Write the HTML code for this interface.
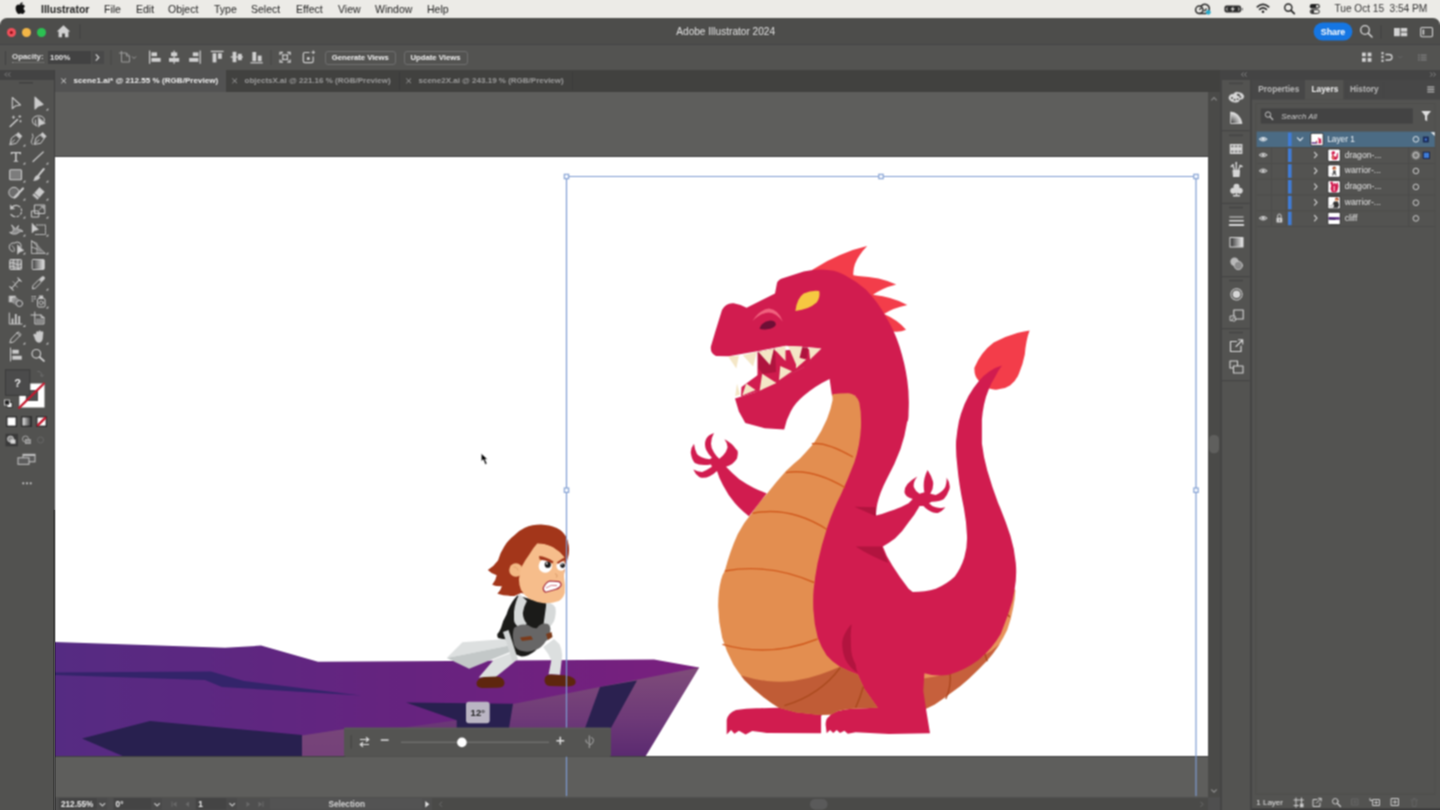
<!DOCTYPE html>
<html>
<head>
<meta charset="utf-8">
<title>Adobe Illustrator 2024</title>
<style>
html,body{margin:0;padding:0;}
body{width:1440px;height:810px;overflow:hidden;position:relative;background:#4d4d4d;font-family:"Liberation Sans",sans-serif;font-size:9px;color:#e6e6e6;-webkit-font-smoothing:antialiased;}
.abs{position:absolute;}
#soft{position:absolute;left:0;top:0;width:1440px;height:810px;filter:url(#sb);}
/* mac menu bar */
#menubar{left:0;top:0;width:1440px;height:28px;background:#ecebe7;color:#1d1d1d;font-size:10.5px;}
#menubar span{position:absolute;top:3px;white-space:nowrap;}
/* title bar */
#titlebar{left:0;top:18px;width:1440px;height:26px;background:#4d4d4b;border-radius:7px 7px 0 0;}
#ctrlbar{left:0;top:44px;width:1440px;height:26px;background:#535351;border-top:1px solid #454545;box-sizing:border-box;}
#tabbar{left:0;top:70px;width:1440px;height:22px;background:#41413f;}
.tl{position:absolute;top:28px;width:9px;height:9px;border-radius:50%;}
/* toolbar */
#toolbar{left:0;top:70px;width:54px;height:740px;background:#525250;}
#canvas{left:55px;top:92px;width:1153px;height:706px;background:#5e5e5c;overflow:hidden;}
#artboard{left:0;top:64px;width:1153px;height:599px;background:#fff;border-top:1px solid #404040;border-bottom:1.500px solid #404040;box-sizing:content-box;}
#vscroll{left:1208px;top:92px;width:12px;height:704px;background:#4a4a48;}
#status{left:55px;top:796px;width:1165px;height:14px;background:#4c4c4c;}
#dockgap{left:1220px;top:70px;width:220px;height:740px;background:#444444;}
#dock{left:1222px;top:80px;width:27.500px;height:730px;background:#535351;}
#panel{left:1251.700px;top:80px;width:188.300px;height:730px;background:#535351;}
.ptab{position:absolute;top:0;height:20px;line-height:18px;font-size:8.5px;font-weight:bold;color:#bdbdbd;}
.row{position:absolute;left:4px;width:180px;height:15px;}
.lname{position:absolute;font-size:8.5px;color:#e0e0e0;top:3px;}
.lay{font-size:8.600px;color:#e2e2e2;line-height:11px;white-space:nowrap;}
.st{font-size:8.200px;line-height:11px;white-space:nowrap;}
.btn{position:absolute;border:1px solid #6f6f6f;border-radius:3px;color:#f0f0f0;font-size:7.700px;font-weight:bold;text-align:center;box-sizing:border-box;}
</style>
</head>
<body>
<svg width="0" height="0" style="position:absolute"><defs><filter id="sb" x="0" y="0" width="100%" height="100%" color-interpolation-filters="sRGB"><feConvolveMatrix order="3" kernelMatrix="1 2 1 2 4 2 1 2 1" divisor="16" edgeMode="duplicate" preserveAlpha="true"/></filter></defs></svg>
<div id="soft">

<!-- MENUBAR -->
<div id="menubar" class="abs">
  <svg class="abs" style="left:15px;top:2px" width="11" height="13" viewBox="0 0 11 13"><path d="M7.6 0.2c0.1 0.8-0.3 1.6-0.8 2.1-0.5 0.5-1.200 0.900-1.900 0.800-0.100-0.800 0.300-1.500 0.800-2 0.500-0.500 1.300-0.900 1.900-0.900zM9.900 4.400c-0.100 0.100-1.300 0.800-1.300 2.200 0 1.700 1.500 2.300 1.600 2.300-0 0.100-0.300 0.900-0.800 1.700-0.500 0.700-1 1.400-1.800 1.400-0.800 0-1-0.500-1.900-0.500-0.900 0-1.200 0.500-1.900 0.500-0.800 0-1.300-0.700-1.900-1.500C1.200 9.400 0.600 7.700 0.600 6.100c0-2.300 1.500-3.500 2.900-3.500 0.800 0 1.400 0.500 1.900 0.500 0.500 0 1.200-0.500 2.100-0.500 0.300 0 1.600 0 2.400 1.800z" fill="#111"/></svg>
  <span style="left:41px;font-weight:bold">Illustrator</span>
  <span style="left:104px">File</span>
  <span style="left:136px">Edit</span>
  <span style="left:168px">Object</span>
  <span style="left:214px">Type</span>
  <span style="left:251px">Select</span>
  <span style="left:296px">Effect</span>
  <span style="left:338px">View</span>
  <span style="left:375px">Window</span>
  <span style="left:427px">Help</span>
  <span style="left:1334.500px;font-size:10.200px;color:#333;letter-spacing:-0.050px">Tue Oct 15&nbsp; 3:54 PM</span>
</div>

<!-- TITLE BAR -->
<div id="titlebar" class="abs"></div>
<div class="tl" style="left:7px;background:#f0505a"></div>
<div class="tl" style="left:22px;background:#f3b647"></div>
<div class="tl" style="left:37px;background:#2cc152"></div>
<div class="abs" id="ttl" style="left:676.3px;top:25.8px;font-size:10.1px;color:#e2e2e2;white-space:nowrap">Adobe Illustrator 2024</div>

<!-- CONTROL BAR -->
<div id="ctrlbar" class="abs"></div>

<!-- TAB BAR -->
<div id="tabbar" class="abs"></div>

<!-- menubar status icons -->
<svg class="abs" style="left:1190px;top:0" width="140" height="18" viewBox="1190 0 140 18">
  <!-- creative cloud -->
  <g fill="none" stroke="#2c2c2c" stroke-width="1.500">
    <circle cx="1199.300" cy="9.800" r="3.700"/>
    <path d="M1201 6.200 Q1203 3.800 1206 4.500 Q1209.500 5.600 1209.300 9.200 Q1209 12.500 1206 13.400 L1199.300 13.500"/>
    <path d="M1199.500 10 Q1200 7.800 1202 7.800 M1204 10.800 Q1206.300 10.300 1206.200 8.300" stroke-width="1.200"/>
  </g>
  <circle cx="1208.300" cy="12.300" r="2.400" fill="#29a9c9"/>
  <!-- battery -->
  <rect x="1224.500" y="5.600" width="16.500" height="7" rx="2" fill="#2a2a2a"/>
  <rect x="1241.600" y="7.800" width="1.300" height="2.800" rx="0.600" fill="#6a6a6a"/>
  <path d="M1233.600 6.300 L1230.500 9.600 L1232.600 9.600 L1231.800 12 L1235 8.600 L1232.900 8.600 Z" fill="#ecebe7"/>
  <path d="M1227.200 7.400 Q1226 9 1227.200 10.800 M1238.600 7.400 Q1239.800 9 1238.600 10.800" stroke="#ecebe7" stroke-width="0.900" fill="none"/>
  <!-- wifi -->
  <g fill="none" stroke="#222" stroke-width="1.700" stroke-linecap="round">
    <path d="M1257.300 6.800 Q1263 2 1268.700 6.800"/>
    <path d="M1259.600 9.300 Q1263 6.300 1266.400 9.300"/>
  </g>
  <circle cx="1263" cy="11.800" r="1.300" fill="#222"/>
  <!-- search -->
  <circle cx="1288.300" cy="7.600" r="3.600" fill="none" stroke="#222" stroke-width="1.400"/>
  <path d="M1291 10.300 L1294.300 13.600" stroke="#222" stroke-width="1.700" stroke-linecap="round"/>
  <!-- control centre -->
  <rect x="1309.800" y="4" width="10" height="4.400" rx="2.200" fill="#222"/>
  <circle cx="1317.300" cy="6.200" r="1.300" fill="#ecebe7"/>
  <rect x="1310.300" y="9.700" width="9" height="3.800" rx="1.900" fill="none" stroke="#222" stroke-width="1"/>
  <circle cx="1312.600" cy="11.600" r="1.500" fill="#222"/>
</svg>

<!-- title bar content -->
<svg class="abs" style="left:0;top:18px" width="1440" height="26" viewBox="0 18 1440 26">
  <circle cx="11.300" cy="32.500" r="1.500" fill="#8c1018"/>
  <!-- home -->
  <path d="M63.500 25.200 L56.800 31.400 L58.600 31.400 L58.600 37.300 L62 37.300 L62 33.600 L65 33.600 L65 37.300 L68.400 37.300 L68.400 31.400 L70.200 31.400 Z" fill="#d2d2d2"/>
  <rect x="79.500" y="24" width="1" height="15" fill="#434343"/>
  <!-- share -->
  <rect x="1313.600" y="22.600" width="38.800" height="18" rx="9" fill="#1576e3"/>
  <text x="1333" y="35" font-family="Liberation Sans, sans-serif" font-size="8.800" font-weight="bold" fill="#fff" text-anchor="middle">Share</text>
  <!-- search -->
  <circle cx="1365" cy="30" r="4.300" fill="none" stroke="#d6d6d6" stroke-width="1.300"/>
  <path d="M1368.200 33.200 L1372 37" stroke="#d6d6d6" stroke-width="1.500" stroke-linecap="round"/>
  <rect x="1380.500" y="25" width="1" height="14" fill="#434343"/>
  <!-- layout 1 -->
  <rect x="1394" y="28" width="5.800" height="8.200" fill="#d2d2d2"/>
  <rect x="1400.800" y="28" width="6.400" height="3.600" fill="#d2d2d2"/>
  <rect x="1400.800" y="32.600" width="6.400" height="3.600" fill="#d2d2d2"/>
  <!-- layout 2 -->
  <rect x="1420.700" y="27.500" width="11.800" height="9.200" rx="1.200" fill="none" stroke="#d2d2d2" stroke-width="1.100"/>
  <rect x="1422.600" y="29.500" width="1.600" height="5.200" fill="#d2d2d2"/>
</svg>

<!-- control bar content -->
<div class="abs" style="left:4.500px;top:50.500px;width:1.200px;height:14px;background:#414141"></div>
<div class="abs" style="left:12px;top:51.500px;font-size:7.900px;font-weight:bold;color:#e0e0e0;border-bottom:1px dotted #8a8a8a;line-height:10px;white-space:nowrap">Opacity:</div>
<div class="abs" style="left:47.500px;top:51px;width:43.500px;height:13px;background:#424242"></div>
<div class="abs" style="left:50px;top:52px;font-size:7.900px;font-weight:bold;color:#e6e6e6;line-height:11px">100%</div>
<div class="abs" style="left:92px;top:51px;width:11.500px;height:13px;background:#494949"></div>
<svg class="abs" style="left:0;top:44px" width="1440" height="26" viewBox="0 44 1440 26">
  <path d="M95.800 54.300 L98.800 57.500 L95.800 60.700" stroke="#d8d8d8" stroke-width="1.200" fill="none"/>
  <rect x="110.500" y="50" width="1" height="15" fill="#474747"/>
  <!-- doc setup icon -->
  <g stroke="#9b9b9b" stroke-width="1" fill="none">
    <path d="M121.500 51 L121.500 62 L129.500 62 L129.500 56 L126.500 53 L119 53 M126.500 53 L126.500 56 L129.500 56"/>
    <path d="M132 56.500 L134 58.500 L136 56.500"/>
  </g>
  <!-- align icons -->
  <g fill="#d0d0d0">
    <rect x="149" y="50.600" width="1.200" height="13.200"/><rect x="151.400" y="52.400" width="5.600" height="3.800"/><rect x="151.400" y="58" width="9.200" height="3.800"/>
    <rect x="173.500" y="50.600" width="1.200" height="13.200"/><rect x="171" y="52.400" width="6.200" height="3.800"/><rect x="169" y="58" width="10.200" height="3.800"/>
    <rect x="199.600" y="50.600" width="1.200" height="13.200"/><rect x="192.800" y="52.400" width="5.600" height="3.800"/><rect x="189.200" y="58" width="9.200" height="3.800"/>
    <rect x="210.800" y="50.800" width="12.800" height="1.200"/><rect x="212.600" y="53.200" width="3.800" height="9.200"/><rect x="218" y="53.200" width="3.800" height="5.600"/>
    <rect x="230.600" y="56.400" width="12.400" height="1.200"/><rect x="232.600" y="51.800" width="3.800" height="10.400"/><rect x="238" y="53.800" width="3.800" height="6.400"/>
    <rect x="250.400" y="62.200" width="12.400" height="1.200"/><rect x="252.400" y="52" width="3.800" height="9.200"/><rect x="257.800" y="55.600" width="3.800" height="5.600"/>
  </g>
  <rect x="270.500" y="50" width="1" height="15" fill="#474747"/>
  <!-- focus icon -->
  <g stroke="#cfcfcf" stroke-width="1.200" fill="none">
    <path d="M280 55 L280 52.300 L283 52.300 M287.200 52.300 L290.200 52.300 L290.200 55 M290.200 59.400 L290.200 62.200 L287.200 62.200 M283 62.200 L280 62.200 L280 59.400"/>
    <rect x="282.800" y="55" width="4.600" height="4.500"/>
    <path d="M280.500 52.800 L282.800 55 M289.700 52.800 L287.400 55 M289.700 61.700 L287.400 59.500 M280.500 61.700 L282.800 59.500" stroke-width="0.800"/>
  </g>
  <!-- generate icon -->
  <g stroke="#cfcfcf" stroke-width="1.200" fill="none">
    <path d="M309.500 52.500 L305 52.500 Q303.300 52.500 303.300 54.200 L303.300 61 Q303.300 62.700 305 62.700 L311.500 62.700 Q313.200 62.700 313.200 61 L313.200 56.500"/>
    <circle cx="308.300" cy="58.400" r="0.900" fill="#cfcfcf"/>
    <path d="M313.300 50.500 L313.300 54.100 M311.500 52.300 L315.100 52.300" stroke-width="1"/>
  </g>
</svg>
<div class="btn" style="left:325px;top:50.500px;width:70.500px;height:14px;line-height:12px">Generate Views</div>
<div class="btn" style="left:403.500px;top:50.500px;width:64px;height:14px;line-height:12px">Update Views</div>
<svg class="abs" style="left:1350px;top:44px" width="90" height="26" viewBox="1350 44 90 26">
  <g fill="#d2d2d2">
    <rect x="1362" y="52.600" width="3.800" height="3.800"/><rect x="1367.600" y="52.600" width="3.800" height="3.800"/><rect x="1362" y="58" width="3.800" height="3.800"/><rect x="1367.600" y="58" width="3.800" height="3.800"/>
    <rect x="1381.500" y="52" width="2" height="2.400"/><rect x="1381.500" y="55.800" width="2" height="2.400"/><rect x="1381.500" y="59.600" width="2" height="2.400"/>
  </g>
  <path d="M1385.500 54.500 L1389 54.500 Q1392 54.500 1392 57.200 Q1392 60 1389 60 L1385.500 60" stroke="#d2d2d2" stroke-width="1.300" fill="none"/>
  <path d="M1398.300 56 L1400.300 58 L1402.300 56" stroke="#666" stroke-width="1" fill="none"/>
  <g fill="#777">
    <rect x="1418" y="54.400" width="1.600" height="1.500"/><rect x="1420.600" y="54.400" width="6" height="1.500"/>
    <rect x="1418" y="56.800" width="1.600" height="1.500"/><rect x="1420.600" y="56.800" width="6" height="1.500"/>
    <rect x="1418" y="59.200" width="1.600" height="1.500"/><rect x="1420.600" y="59.200" width="6" height="1.500"/>
  </g>
</svg>

<!-- tabs -->
<div class="abs" style="left:54px;top:70px;width:171.500px;height:22px;background:#525252"></div>
<div class="abs" style="left:399px;top:72px;width:1px;height:18px;background:#393939"></div>
<div class="abs" style="left:572px;top:72px;width:1px;height:18px;background:#3b3b3a"></div>
<svg class="abs" style="left:60px;top:77px" width="8" height="8"><path d="M1.300 1.500 L6 6.200 M6 1.500 L1.300 6.200" stroke="#d6d6d6" stroke-width="1" fill="none"/></svg>
<div class="abs" id="t1" style="left:73.500px;top:74.800px;font-size:8px;font-weight:bold;color:#f2f2f2;line-height:11px;white-space:nowrap;letter-spacing:0.050px">scene1.ai* @ 212.55 % (RGB/Preview)</div>
<svg class="abs" style="left:231px;top:77px" width="8" height="8"><path d="M1.300 1.500 L6 6.200 M6 1.500 L1.300 6.200" stroke="#9a9a9a" stroke-width="1" fill="none"/></svg>
<div class="abs" id="t2" style="left:244.500px;top:74.800px;font-size:8px;font-weight:bold;color:#9d9d9d;line-height:11px;white-space:nowrap">objectsX.ai @ 221.16 % (RGB/Preview)</div>
<svg class="abs" style="left:404.700px;top:77px" width="8" height="8"><path d="M1.300 1.500 L6 6.200 M6 1.500 L1.300 6.200" stroke="#9a9a9a" stroke-width="1" fill="none"/></svg>
<div class="abs" id="t3" style="left:418.500px;top:74.800px;font-size:8px;font-weight:bold;color:#9d9d9d;line-height:11px;white-space:nowrap">scene2X.ai @ 243.19 % (RGB/Preview)</div>

<!-- TOOLBAR -->
<div id="toolbar" class="abs"></div>
<div class="abs" style="left:0;top:70px;width:54px;height:9.500px;background:#434343"></div>
<svg class="abs" style="left:0;top:70px" width="55" height="440" viewBox="0 70 55 440">
  <rect x="54" y="70" width="1" height="440" fill="#3e3e3e"/>
  <path d="M7 72.500 L5 74.500 L7 76.500 M10.200 72.500 L8.200 74.500 L10.200 76.500" stroke="#8c8c8c" stroke-width="0.900" fill="none"/>
  <rect x="19" y="82" width="14" height="1.500" fill="#414141"/>
  <g stroke="#cbcbcb" fill="none" stroke-width="1.100" stroke-linejoin="round" stroke-linecap="round">
    <!-- r1: selection / direct selection -->
    <path d="M12.300 97.500 L12.300 108.700 L15.300 106 L20.500 105 Z"/>
    <path d="M35 97.200 L35 109 L38 106.200 L43 104.400 Z" fill="#cbcbcb"/>
    <!-- r2: wand / lasso -->
    <path d="M10.200 126.500 L17.500 119.500" stroke-width="1.600"/>
    <path d="M13.500 116 L13.500 118.500 M12.200 117.200 L14.800 117.200 M19.800 115.500 L19.800 117.500 M18.800 116.500 L20.800 116.500 M20.500 120.500 L20.500 122 M19.800 121.200 L21.200 121.200" stroke-width="0.900"/>
    <path d="M36 125.500 Q32 124 32.300 120.500 Q33 116 38.500 115.800 Q44 116 44.400 120 Q44.300 121.500 43.500 122.300" stroke-width="1"/>
    <path d="M35.500 120 Q35 123 36.500 126" stroke-width="0.900"/>
    <path d="M38.400 117.500 L38.400 127 L40.800 124.800 L45 123.400 Z" fill="#cbcbcb" stroke-width="0.600"/>
    <!-- r3: pen / curvature -->
    <path d="M10 144.400 L11.500 138 L16 134.800 L19.800 138.600 L16.600 143 Z M10 144.400 L14.500 140" stroke-width="1"/>
    <path d="M16.300 134.400 L18.300 132.500 L22 136.200 L20.100 138.200 Z" fill="#cbcbcb" stroke-width="0.600"/>
    <path d="M34.500 144 L36 138 L40.300 134.800 L44.100 138.600 L41 143 Z M34.500 144 L39 139.800" stroke-width="1"/>
    <path d="M40.600 134.400 L42.600 132.500 L46.300 136.200 L44.400 138.200 Z" fill="#cbcbcb" stroke-width="0.600"/>
    <path d="M32.500 134 Q34 137 32 139.500 Q30 142.500 32.500 144.500" stroke-width="0.900"/>
    <!-- r4: type / line -->
    <path d="M10.800 152 L21 152 L21 154.300 L19.800 154.300 L19.400 153.200 L16.700 153.200 L16.700 160.600 L18.200 161 L18.200 161.800 L13.600 161.800 L13.600 161 L15.100 160.600 L15.100 153.200 L12.400 153.200 L12 154.300 L10.800 154.300 Z" fill="#cbcbcb" stroke="none"/>
    <path d="M33 161.500 L43.200 152" stroke-width="1.200"/>
    <!-- r5: rect / brush -->
    <rect x="9.700" y="169.700" width="11.800" height="10" rx="1" fill="#7c7c7c" stroke-width="1.100"/>
    <path d="M43.800 169 L38.500 175.300" stroke-width="2"/>
    <path d="M34 180.500 Q34.500 176.500 37 175.500 Q39.500 176 39.800 177.800 Q38 180.500 34 180.500 Z" fill="#cbcbcb" stroke-width="0.600"/>
    <!-- r6: shaper / eraser -->
    <circle cx="14" cy="192.500" r="5.200" fill="#6c6c6c" stroke-width="1"/>
    <path d="M14.500 197.500 L23 188.500" stroke-width="2.200"/>
    <path d="M32.800 195 L39.500 187.500 L44.300 191.800 L37.600 199.200 Z" fill="#cbcbcb" stroke-width="0.600"/>
    <path d="M34.500 193.500 L39.200 197.600" stroke="#555" stroke-width="0.900"/>
    <!-- r7: rotate / scale -->
    <path d="M11.500 207.500 Q16 203.500 20 207 Q23.500 211.500 19.500 215.500 Q15 218.500 11 214.500" stroke-width="1.100" stroke-dasharray="9 0.100 0.100 2 2 2 2 2 2 2"/>
    <path d="M10.300 205.300 L10.500 209.300 L14.300 208.800 Z" fill="#cbcbcb" stroke-width="0.500"/>
    <rect x="31.800" y="211" width="7" height="6" stroke-width="1"/>
    <rect x="34.800" y="205" width="10" height="8.500" stroke-width="1"/>
    <path d="M39.500 209.500 L43.300 206.500 M43.400 208.800 L43.400 206.400 L41 206.400" stroke-width="0.800"/>
    <!-- r8: warp / free transform -->
    <path d="M10 232.500 Q13 233 13.500 230 Q13 227 11.500 225 Q14 226.500 15.500 229.500 Q17.500 226 18.500 225.500 Q17.500 228 18 230 Q21 228.500 23 231.500 Q21 230.800 19.500 232 Q16.500 235 12.500 234 Z" stroke-width="0.900" fill="#8a8a8a"/>
    <path d="M32 223.500 L32 233 L34.300 230.800 L38.300 229.600 Z" fill="#cbcbcb" stroke-width="0.500"/>
    <path d="M36.500 225 L45.500 225 L45.500 234.500 L35.500 234.500" stroke-width="0.900" stroke-dasharray="1.400 1.100"/>
    <!-- r9: shape builder / perspective -->
    <path d="M13 251.500 Q9 250.500 9.300 246.500 Q10 242.500 14.500 243 Q17 241 20 243 Q21.500 244.500 21 247" stroke-width="1"/>
    <path d="M12 245.500 Q15 247.500 14.500 251" stroke-width="0.800"/>
    <path d="M17.500 245 L17.500 254.200 L19.800 252 L23.600 250.600 Z" fill="#cbcbcb" stroke-width="0.500"/>
    <path d="M31.500 241 L31.500 253.500 L45 253.500 Z M31.500 241 L37 243.500 L37 253.500 M31.500 247 L41 250.500" stroke-width="0.800"/>
    <path d="M37.500 244 L44.500 253 L37.500 253 Z" fill="#8a8a8a" stroke="none" opacity="0.700"/>
    <!-- r10: mesh / gradient -->
    <rect x="9.700" y="259.500" width="11.800" height="10" rx="0.800" fill="#7d7d7d" stroke-width="1"/>
    <path d="M9.700 263 Q13 261.500 15.500 264 Q18 266 21.500 264 M9.700 266.800 Q13 265.800 15.500 267.500 Q18 269 21.500 267.500 M13.500 259.500 Q12.500 264 14 269.500 M17.800 259.500 Q17 264 18.300 269.500" stroke-width="0.700" stroke="#e6e6e6"/>
  </g>
  <defs>
    <linearGradient id="tg" x1="0" x2="1" y1="0" y2="0"><stop offset="0" stop-color="#3a3a3a"/><stop offset="1" stop-color="#e4e4e4"/></linearGradient>
    <linearGradient id="tg2" x1="0" x2="1" y1="0" y2="0"><stop offset="0" stop-color="#f2f2f2"/><stop offset="1" stop-color="#2e2e2e"/></linearGradient>
  </defs>
  <rect x="32.200" y="259.500" width="12" height="10" rx="0.800" fill="url(#tg)" stroke="#cbcbcb" stroke-width="1"/>
  <g stroke="#cbcbcb" fill="none" stroke-width="1.100" stroke-linejoin="round" stroke-linecap="round">
    <!-- r11: measure/width / eyedropper -->
    <path d="M11.500 288.500 L19.500 279.500 M9.800 286.700 L13.200 290.200 M17.800 277.800 L21.200 281.300" stroke-width="1.100"/>
    <path d="M13 281.500 L15 283.500 M15.500 285.500 L17.500 287" stroke-width="0.700"/>
    <path d="M32.500 288.500 L33 285.500 L39 279.500 L41.500 282 L35.500 288 Z" stroke-width="1"/>
    <path d="M39.500 279 L42 276.800 Q43.500 276 44.300 277 Q45 278 44.200 279.200 L42 281.500 Z" fill="#cbcbcb" stroke-width="0.600"/>
    <!-- r12: blend / symbol sprayer -->
    <rect x="9.300" y="296" width="6.300" height="6" fill="#cbcbcb" stroke-width="0.500"/>
    <circle cx="15" cy="300.500" r="3.300" fill="#9a9a9a" stroke="none"/>
    <circle cx="17" cy="302" r="3.300" fill="#858585" stroke="none"/>
    <circle cx="19.500" cy="303.500" r="3.100" fill="#515151" stroke-width="1"/>
    <rect x="37.500" y="298.500" width="7.500" height="8.500" rx="1.200" stroke-width="1"/>
    <rect x="39.500" y="295.800" width="3.500" height="2.500" fill="#cbcbcb" stroke-width="0.500"/>
    <circle cx="41.200" cy="302.800" r="1.900" stroke-width="0.800"/>
    <path d="M32 296.500 L33 296.500 M34.500 296.500 L35.500 296.500 M32 298.800 L33 298.800 M34.500 298.800 L35.500 298.800 M32 301 L33 301" stroke-width="1"/>
    <!-- r13: graph / artboard -->
    <path d="M9.300 313 L9.300 324 L22 324" stroke-width="1"/>
    <path d="M12.500 324 L12.500 318.500 M15.800 324 L15.800 314 M19.200 324 L19.200 316" stroke-width="1.800" stroke-linecap="butt"/>
    <path d="M34.800 312 L34.800 324 L44 324 L44 317.500 L41 315 L31 315 M41 315 L41 317.500 L44 317.500" stroke-width="1"/>
    <path d="M36 318.500 L43 318.500 L43 323 L36 323 Z" fill="#888" stroke="none"/>
    <!-- r14: pencil-like / hand -->
    <path d="M10 342.500 L11 339 L18 331.800 L21 334.500 L14 341.700 Z M17 333 L20 335.800" stroke-width="1"/>
    <path d="M34.500 337 Q33 335 34 334 Q35 333.500 36 335 L36.300 333 Q36.500 331.500 37.600 331.600 Q38.500 331.800 38.500 333 L38.800 331.500 Q39.200 330.500 40.200 330.800 Q41 331.200 40.800 332.500 L41.200 332 Q42 331.200 42.800 331.800 Q43.300 332.500 43 333.500 L42.500 338.500 Q42 342 39.500 342.500 Q36.500 342.500 35.500 340 Z" fill="#cbcbcb" stroke-width="0.500"/>
    <!-- r15: align / zoom -->
    <path d="M10.500 348 L10.500 361" stroke-width="1"/>
    <rect x="12.500" y="350" width="6" height="3.400" fill="#cbcbcb" stroke-width="0.500"/>
    <rect x="12.500" y="356" width="9" height="3.400" fill="#cbcbcb" stroke-width="0.500"/>
    <circle cx="36.300" cy="353.800" r="4.300" stroke-width="1.200"/>
    <path d="M39.500 357 L44 361" stroke-width="1.700"/>
  </g>
  <!-- flyout corners -->
  <g fill="#c4c4c4">
    <path d="M48.300 108 L48.300 110.500 L45.800 110.500 Z"/>
    <path d="M25.300 144 L25.300 146.500 L22.800 146.500 Z"/>
    <path d="M25.300 162 L25.300 164.500 L22.800 164.500 Z"/><path d="M48.300 162 L48.300 164.500 L45.800 164.500 Z"/>
    <path d="M25.300 180 L25.300 182.500 L22.800 182.500 Z"/><path d="M48.300 180 L48.300 182.500 L45.800 182.500 Z"/>
    <path d="M25.300 198 L25.300 200.500 L22.800 200.500 Z"/><path d="M48.300 198 L48.300 200.500 L45.800 200.500 Z"/>
    <path d="M25.300 216 L25.300 218.500 L22.800 218.500 Z"/><path d="M48.300 216 L48.300 218.500 L45.800 218.500 Z"/>
    <path d="M25.300 234 L25.300 236.500 L22.800 236.500 Z"/><path d="M48.300 234 L48.300 236.500 L45.800 236.500 Z"/>
    <path d="M25.300 252 L25.300 254.500 L22.800 254.500 Z"/><path d="M48.300 252 L48.300 254.500 L45.800 254.500 Z"/>
    <path d="M48.300 288 L48.300 290.500 L45.800 290.500 Z"/>
    <path d="M48.300 306 L48.300 308.500 L45.800 308.500 Z"/>
    <path d="M25.300 324.500 L25.300 327 L22.800 327 Z"/>
    <path d="M25.300 342 L25.300 344.500 L22.800 344.500 Z"/><path d="M48.300 342 L48.300 344.500 L45.800 344.500 Z"/>
  </g>
  <!-- fill / stroke -->
  <rect x="19.300" y="383.500" width="25.200" height="24" fill="#fff"/>
  <rect x="25.800" y="390" width="12.200" height="11" fill="#4e4e4e"/>
  <path d="M18.500 408.500 L44.500 383" stroke="#c5182e" stroke-width="2.300"/>
  <rect x="5.500" y="369.800" width="24.300" height="25.500" fill="#4b4b4b" stroke="#3a3a3a" stroke-width="1"/>
  <text x="17.600" y="386.700" font-family="Liberation Sans, sans-serif" font-size="11" font-weight="bold" fill="#f0f0f0" text-anchor="middle">?</text>
  <path d="M37.500 371.500 Q41.500 371 42 376 M40.300 374.800 L42 376.800 L43.700 374.800" stroke="#6e6e6e" stroke-width="1" fill="none"/>
  <rect x="7" y="402.500" width="5" height="5" fill="#fff" stroke="#222" stroke-width="0.800"/>
  <rect x="4.500" y="400" width="5" height="5" fill="#222" stroke="#ddd" stroke-width="0.800"/>
  <!-- colour mode -->
  <rect x="6.800" y="416.800" width="9.500" height="9.500" fill="#fff" stroke="#2e2e2e" stroke-width="1.400"/>
  <rect x="21.800" y="416.800" width="9.500" height="9.500" fill="url(#tg2)" stroke="#2e2e2e" stroke-width="1.400"/>
  <rect x="36.800" y="416.800" width="9.500" height="9.500" fill="#fff" stroke="#2e2e2e" stroke-width="1.400"/>
  <path d="M37.300 425.800 L45.800 417.300" stroke="#c5182e" stroke-width="2.400"/>
  <!-- draw modes -->
  <rect x="5.500" y="433.800" width="12.500" height="12.500" fill="#3a3a3a"/>
  <circle cx="10.500" cy="439" r="3" fill="#8c8c8c" stroke="#d8d8d8" stroke-width="0.800"/>
  <rect x="10.500" y="439.500" width="5" height="4.200" fill="#d8d8d8"/>
  <circle cx="25.500" cy="439" r="3" fill="none" stroke="#bdbdbd" stroke-width="0.800"/>
  <rect x="25.500" y="439.500" width="5" height="4.200" fill="#8a8a8a" stroke="#bdbdbd" stroke-width="0.600"/>
  <circle cx="40.500" cy="440" r="3" fill="none" stroke="#6c6c6c" stroke-width="0.800"/>
  <!-- screen mode -->
  <rect x="23" y="454.300" width="12" height="7.500" fill="#5c5c5c" stroke="#c4c4c4" stroke-width="1"/>
  <rect x="18" y="457.800" width="11" height="6.500" fill="#5c5c5c" stroke="#c4c4c4" stroke-width="1"/>
  <rect x="23" y="454.300" width="12" height="1.600" fill="#c4c4c4"/>
  <!-- dots -->
  <circle cx="23.300" cy="483.300" r="1.100" fill="#c4c4c4"/><circle cx="27" cy="483.300" r="1.100" fill="#c4c4c4"/><circle cx="30.700" cy="483.300" r="1.100" fill="#c4c4c4"/>
</svg>


<!-- CANVAS -->
<div id="canvas" class="abs">
  <div id="artboard" class="abs"></div>
</div>
<!-- ARTWORK -->
<svg class="abs" style="left:0;top:0" width="1440" height="810" viewBox="0 0 1440 810">
<defs>
  <clipPath id="cv"><rect x="55" y="157" width="1153" height="599"/></clipPath>
  <linearGradient id="gTop" x1="55" y1="0" x2="700" y2="0" gradientUnits="userSpaceOnUse">
    <stop offset="0" stop-color="#552b82"/><stop offset="0.55" stop-color="#66237f"/><stop offset="1" stop-color="#7a1f7e"/>
  </linearGradient>
  <linearGradient id="gFace" x1="0" y1="670" x2="0" y2="756" gradientUnits="userSpaceOnUse">
    <stop offset="0" stop-color="#7e4b79"/><stop offset="0.55" stop-color="#6e3a78"/><stop offset="1" stop-color="#5b2a70"/>
  </linearGradient>
  <linearGradient id="gFace2" x1="0" y1="700" x2="0" y2="760" gradientUnits="userSpaceOnUse">
    <stop offset="0" stop-color="#7a4a7a"/><stop offset="1" stop-color="#744079"/>
  </linearGradient>
</defs>
<g clip-path="url(#cv)">
<!-- ============ CLIFF ============ -->
<g id="cliff">
  <path d="M55 642 L225 647.800 L261 645.600 L318 661.700 L450 661 L654 659.500 L699 667.500 L645 757 L55 757 Z" fill="url(#gTop)"/>
  <!-- front face -->
  <path d="M699 667.500 L513 704 L456.700 720.300 L404 727.500 L345 729 L302 736 L302 757 L645 757 Z" fill="url(#gFace)"/>
  <!-- crevice -->
  <path d="M55 672.500 L211 671.400 L244 681 L361 695.500 L222 687 L205 680 L55 675 Z" fill="#33246a"/>
  <!-- dark shape A -->
  <path d="M82 738.500 L150 721 L302 735 L302 757 L125 757 Z" fill="#28204f"/>
  <!-- dusty B -->
  <path d="M302 735.500 L345 729 L345 757 L302 757 Z" fill="url(#gFace2)"/>
  <!-- dark shape C -->
  <path d="M406 702.400 L513 703.700 L509 728 L456.700 728 L456.700 720.300 Z" fill="#28204f"/>
  <!-- dark stripe -->
  <path d="M600 687 L637 680.500 L595 757 L574.500 757 Z" fill="#2b2150"/>
</g>
<!-- ============ DRAGON ============ -->
<g id="dragon">
  <!-- crest spikes -->
  <path d="M812 270 Q840 252 867.100 246 Q852 262 853.400 275.300 L858 276 Q880 277 896.200 284.400 Q882 288 873 294.800 Q893 297 907.300 305 Q893 308 884 314 Q898 320 906 329.800 Q899 333 889 331 L860 300 Z" fill="#f33d4a"/>
  <!-- tail leaf -->
  <path d="M1029.600 330.400 Q1011.500 333 993.700 342.600 Q981 352 974.400 367.800 Q974 376 978.900 381 Q984 388 989.300 388.500 Q995 390.500 999.600 389 Q1006 388.500 1010 385.600 Q1016 381 1018.900 373.700 Q1023 364 1024.800 354.400 Q1026 340 1029.600 330.400 Z" fill="#f33d4a"/>
  <!-- back foot (foot 1) -->
  <path d="M726.700 734.400 L726.700 720 Q728 713 736 710 Q748 707.800 760 708.200 L830 706 L821.100 716 L821.100 733.300 L766.700 732.900 L752.200 731.100 L745.600 734.400 L738.900 730.700 L734.400 733.800 L731.100 730 Z" fill="#d11c4f"/>
  <!-- right orange sliver (belly behind) -->
  <path d="M1012 585 L1015.400 590.400 Q1015 599 1013.200 607.700 Q1011 620 1007.200 630 Q1003.500 638 998.500 645.700 Q993 654 986.400 661.200 Q978 670 969 678.500 Q961 686 951.800 692.300 Q943 699 934.600 704.400 L925.900 708.800 L918 712 L915 670 Q950 665 985 640 Z" fill="#e7935a"/>
  <path d="M1000 644 Q992 651 983 656 Q975 662 965.700 666.400 Q958 670 950 672.500 Q937 677 923.300 678.500 L918 680 L918 712 L925.900 708.800 L934.600 704.400 Q943 699 951.800 692.300 Q961 686 969 678.500 Q978 670 986.400 661.200 Q993 654 998.500 645.700 Z" fill="#c6603c"/>
  <g stroke="#a8421a" stroke-width="1.200" fill="none">
    <path d="M1005.400 612 L1009.700 617"/>
    <path d="M983 647.400 Q985 655 987.300 661.200"/>
    <path d="M950 671.600 Q951.500 686 945.800 699"/>
  </g>
  <!-- main body: head top + neck + torso + tail -->
  <path d="M821.300 348.300
    L785.500 345.800 L757 351.300 L728.500 356.200 L716 356 Q710 353 710.900 346.600 L715.500 331 L722 310 Q726 302.500 733.700 303.300 Q741 304.500 746.600 307.700 L775 293.500 L777 283 Q778 280 782 278.500 L803.700 271.500 Q818 268.500 829.600 270.200 Q838 271 845 275.300 Q856 281 865.800 289.600 Q878 302 886.600 318 Q895 332 899.500 346.600 Q905 364 907.300 380.300 Q909.500 396 908.600 411.400 Q908.600 421 907.200 421.700 Q905 436 900.500 448.900 Q895 464 886.900 478.700 Q880 492 877.400 503.200 Q876 510 876 515.400
    Q883 514 889.600 511.300 Q900 508 908.600 503.200 L912.700 499.100
    Q905 497 904.500 492.300 Q904 484 917.300 476.600 Q912.500 483 914 487.500 Q915.500 491.500 919.500 493.700
    L924.400 492.300 Q922 481 927.600 470 Q931.500 476 933 481.500 Q934 488 930.300 493.700
    L935.800 495 Q943 491.500 945.300 486.900 Q947 482 946.600 477.400 Q951 484 949.300 489.600 Q947 496 943.900 499.100 Q939 502 931.700 501.800
    L929 503.200 Q932 506.500 935.800 507.300 Q941 508.500 945.300 507.300 Q942 511.500 938.500 512.700 Q934 513.500 930.300 511.300 Q926 509 923.500 505.900
    L919.500 505.900 Q915 515 908.600 522.200 Q903 531 895 538.500 Q889 543 882.800 546.600
    Q886 556 892.300 565.600 Q900 578 908.600 588.700 L912.700 592
    Q925 592 935.800 588.700 Q947 584 954.800 576.500 Q961 568 964.300 557.500 Q967.500 547 967 535.800 Q966.500 520 962.900 503.200 Q959 484 957.500 467.900 Q955.500 452 956.100 440.700 L957.400 430 Q958.500 421 961 413.700 Q964 404 968.500 396 Q973 388 978.900 381 Q984 375 989.300 371.500 Q995 367.500 1001.900 365.600
    Q998 371 995.200 376.700 Q991 383 988.500 390 Q985.500 397 984 404.800 Q982.500 412 981.900 419.600 L981.900 443.400 Q983.500 457 987.300 470.600 Q992 487 998.200 503.200 Q1005 519 1010.400 535.800 Q1014.500 549 1015.800 563 Q1017 577 1014.500 590 Q1013 601 1009 611.800 Q1005 623 1000.700 634 Q992 649 978.500 660 Q965 670 948.900 674.800 Q936 677 924.400 673.300
    L923.300 691 L926.700 713.300 L930 733.300
    L888.900 734 L855.600 732.200 L847.800 733.800 L844.400 730.700 L840 732.900 L836.700 730 L833.300 732.900 L830 730 L826.700 733.300 L825.600 724.400 Q826 718 828.900 716.700 Q832 712.500 837.800 711.100 Q846 708.500 855.600 708.400 L877.800 707.800
    L864.400 689 L857.800 674.400
    Q848 671 840 666.700 Q832 662 826.700 655.600 Q821 647 817.800 637.800 Q814 624 813.300 609 Q813 596 813.600 590 Q815 576 817.600 562.900 Q821.500 545 827.200 527.600 Q833 510 840.700 495 Q848 479 854.300 462.400 Q860 446 861 427 Q861.500 413 858.400 400 L855.500 395.800
    L832 395.800 L829.600 379 Q815 386 803.700 395.800 Q795 403 790.700 411.400 Q786 420 784.200 429.500
    L764.800 428.200 L745.300 423 L738.900 411.400 L735 398.400
    L755.700 392 L777.700 380.300 L803.700 367.300 Z" fill="#d11c4f"/>
  <!-- mouth interior -->
  <path d="M757.500 351.800 L821.300 348.200 L805 366.800 L777.700 380.800 L760.900 388 L757.500 375 Z" fill="#cf1b4d"/>
  <path d="M758 352 L775 348.600 L776 372 L763 374 L758 368 Z" fill="#ae143e"/>
  <path d="M799 347 L808 347.500 L807 358 L800 360 Z" fill="#ae143e"/>
  <path d="M855.500 395.800 Q861.500 413 861 427 Q860 446 854.300 462.400 Q848 479 840.700 495 Q833 510 827.200 527.600 Q821.500 545 817.600 562.900 Q815 576 813.600 590 Q813 596 813.300 609 Q814 624 817.800 637.800 Q821 647 826.700 655.600 Q832 662 840 666.700 Q848 671 857.800 674.400 L864.400 689 L877.800 707.800" stroke="#d11c4f" stroke-width="2.500" fill="none"/>
  <path d="M852 395.800 L858.500 395.800 L862.500 412 L862.500 428 L857 428 Z" fill="#d11c4f"/>
  <!-- belly -->
  <path d="M832.300 394.200 Q840 393 849 393.200 Q856.500 394 859.300 402.500 Q861.500 413 861 427 Q860 446 854.300 462.400 Q848 479 840.700 495 Q833 510 827.200 527.600 Q821.500 545 817.600 562.900 Q815 576 813.600 590 Q813 596 813.300 609 Q814 624 817.800 637.800 Q821 647 826.700 655.600 Q832 662 840 666.700 Q848 671 857.800 674.400 L864.400 689 L877.800 707.800 L855.600 708.400 Q846 708.500 837.800 711.100 L831 714.400 L820 715.100 L795.600 712.200 L778.900 707.800 Q771 703 764.400 697.800 Q753 689 744.400 680 Q738 672 733.300 664.400 Q726 651 722.200 637.800 Q718.500 622 718.200 606.700 Q718 592 721 580 Q722 575 724.800 571 Q730 551 737.800 534 Q744 522 752.600 511.900 Q759 502 767.400 493.300 Q776 482 786 471 Q793 464 800 458.400 Q807 451 813.600 443.400 Q822 431 827 419 Q831 409 832.600 400 Z" fill="#e38e50"/>
  <!-- belly shade -->
  <path d="M741 675.600 Q754 679.500 766.700 681 Q780 682.500 793.300 681 Q807 679 820 674.400 Q830 671 840 666.700 Q848 671 857.800 674.400 L864.400 689 L877.800 707.800 L855.600 708.400 Q846 708.500 837.800 711.100 L831 714.400 L820 715.100 L795.600 712.200 L778.900 707.800 Q771 703 764.400 697.800 Q753 689 744.400 680 Z" fill="#c05c36"/>
  <!-- belly stripes -->
  <g stroke="#d05a1e" stroke-width="1.400" fill="none">
    <path d="M811.900 443.700 Q826 441.500 853 457"/>
    <path d="M786 472.600 Q812 468 845 487.500"/>
    <path d="M752.600 513.300 Q790 506 827 529.500"/>
    <path d="M724.800 571 Q770 563 814 582.500"/>
    <path d="M722.500 644.400 Q770 658 817.500 639"/>
    <path d="M840 667.800 Q820 695 784.400 705.600" stroke="#a8481c"/>
    <path d="M863.300 686.700 Q860 698 855.600 707.800" stroke="#a8481c"/>
  </g>
  <!-- thigh shade -->
  <path d="M851 624.400 Q843 634 842.200 642.200 Q842 652 845.600 660 Q850 668 857.800 673.300 Q856 669 855.600 664.400 Q851 656 851 646.700 Q850 635 851.500 624.400 Z" fill="#b2143f"/>
  <!-- arm notches -->
  <path d="M854.300 506.700 L876 507.200 L876 516.200 Z" fill="#b2143f"/>
  <path d="M855.700 546.600 L881.500 546.600 L888.200 562.900 Q870 556 855.700 546.600 Z" fill="#b2143f"/>
  <!-- left arm + claws -->
  <path d="M766.700 493.300 Q760 491 754 488 Q746 484 739.300 479.300 Q732 473 726 466.700
    Q733 465 737 458.500 Q739 450 736.300 449.600 Q732 443 724.400 439.300 Q728 444 727.400 448 Q726 453 723 455.600 L719.300 458.800
    Q716 456 714 452.600 Q711 448 711 443.700 Q711 438 714 433 Q708 435 706 439.300 Q704 444 706 449.600 Q708 454 711.900 457.800
    L709.600 459.300 Q700 458 697 454 Q694.500 449 694 443.700 Q690 449 691 454 Q692 460 694.800 463 Q700 466 711 464.400
    L711.900 466.700 Q707 470 702.200 471.900 Q698 472 693.300 469.600 Q695 474 699.300 477 Q704 479 709.600 476.300 Q714 474 717 471
    Q719 478 723 485.200 Q728 495 734.800 503 Q741 510 748.900 516.300 Z" fill="#d11c4f"/>
  <!-- eye -->
  <path d="M795.400 311 Q797 298 803.700 293.500 Q811 290 819.200 290.900 Q820.500 297 816.600 302.600 Q809 309.500 795.400 311 Z" fill="#f6c841"/>
  <!-- nostril -->
  <path d="M752.500 321 Q759 310 769 308.600 Q778.500 309.500 782.800 321.800 Q776.500 312.800 768.800 312.400 Q760.500 313 752.500 321 Z" fill="#f0627e"/>
  <path d="M759.500 328.500 Q762 321.500 770 320.500 Q776 320.500 775.800 325 Q774 328.500 767 329.300 Q762 330 759.500 328.500 Z" fill="#6e0f36"/>
  <path d="M741 396.500 L741.500 387 L758.500 374.500 L762 390 Z" fill="#d11c4f"/>
  <!-- teeth -->
  <g fill="#f4e6c6">
    <path d="M728 356.200 L738.900 355.700 L736.300 368.600 Z"/>
    <path d="M742.800 355.200 L757 351.800 L753.100 366.400 Z"/>
    <path d="M758.300 351.800 L773.900 348.700 L770 365.100 Z"/>
    <path d="M773.900 348.700 L785.500 346.100 L785.500 360.900 Z"/>
    <path d="M788.100 346.100 L802.400 346.600 L797.200 367.300 Z"/>
    <path d="M808.800 347.600 L821.300 348.500 L810.100 359.600 Z"/>
    <path d="M735.200 396.300 L740 394.500 L737 383.500 Z"/>
    <path d="M742.200 395.600 L755.600 390 L746.200 383.500 Z"/>
    <path d="M759.600 390.700 L776.400 382.900 L762.200 373.800 Z"/>
    <path d="M779 380.300 L792 371.200 L780.300 366 Z"/>
    <path d="M795.900 368.600 L806.200 359.600 L796.400 357 Z"/>
  </g>
</g>
<!-- ============ WARRIOR ============ -->
<g id="warrior">
  <!-- hair back -->
  <path d="M524.800 527.800 Q532 524.500 541 524.500 Q550 525 556 527.800 Q561.500 530.500 564.800 535.200 Q568 541 569 548.500 Q569.500 554 566.300 558.900 L560 600 L521 593 L514.400 595.900 Q505 596 497.400 593.700 Q501 590 501.900 586.300 Q496 586.500 492.200 584.800 Q496 580 496.700 575.200 Q491 573.500 487.800 570 Q494 566 498 560.400 Q500 553 504 547 Q508 540 514.400 535.200 Q519 530.500 524.800 527.800 Z" fill="#a3361a"/>
  <!-- black vest -->
  <path d="M517.400 595.400 L546.600 603.600 L546 625 L545 640 L535 651 Q528 656.500 521.400 656.500 L514 653.800 L507 640 L498 638 Q496 634 499 632 L501 628 Q503 620 506.500 614.400 Q510 603 517.400 595.400 Z" fill="#1b1b19"/>
  <!-- grey collar left -->
  <path d="M519.400 594 L526.900 600.900 Q523.500 607 522.800 613 Q523 619 526.900 623.900 L520 628 Q514 624 514 619.900 L514 611.700 Q515 602 519.400 594 Z" fill="#d6d9d9"/>
  <!-- grey arm right -->
  <path d="M546.600 602 L548.600 602.200 Q553 604 555.400 607.600 Q556.500 614 554 621.200 Q552 625 548.600 628 L543 628 Q545 614 546.600 602 Z" fill="#d6d9d9"/>
  <!-- right leg -->
  <path d="M554 638.900 L543.200 647 Q549 654 551.300 660.600 L548.600 674.200 L560.100 674.800 L562.200 655.200 Q562 649 559.500 644.300 Z" fill="#dcdfdf"/>
  <!-- left leg -->
  <path d="M494.300 659.200 L513.300 652 L516 660.600 L495.700 676.900 L478.700 677.500 Z" fill="#dcdfdf"/>
  <!-- shoes -->
  <path d="M476.600 684 Q476.600 678.500 484 677 L497 676.500 Q504.500 677.500 504.500 683.500 Q504 687.700 497 687.700 L482 687.900 Q476.800 687.700 476.600 684 Z" fill="#5e260e"/>
  <path d="M544.500 680 Q544.500 675 551 674.600 L566 675.500 Q575.700 677 575.700 682 Q575.500 686.400 568 686.400 L550 686 Q544.500 685.500 544.500 680 Z" fill="#5e260e"/>
  <!-- sword blade -->
  <path d="M446.800 657.900 L462.400 642.300 L505.200 638.900 L507.900 645.700 Z" fill="#dde0e0"/>
  <path d="M446.800 657.900 L507.900 645.700 L510.600 651.800 L469.200 668.700 Z" fill="#c3c8c8"/>
  <!-- crossguard -->
  <path d="M503 632 L508.500 630 L518 659.500 L512.500 661.500 Z" fill="#d2d5d5"/>
  <!-- gloves -->
  <path d="M514 628 Q520 623 528 625 Q534 629 537 628 Q541 622 548 624 Q552 627 549.500 634 Q549 640 545.900 641 Q542 648 535 650 Q528 653 520 650.500 Q514 648 513.500 642 Q512 634 514 628 Z" fill="#676666"/>
  <path d="M520 637.500 L531 636 L533 639.500 L522 641 Z" fill="#7a3a1a"/>
  <path d="M546 634 L551.500 632 L552.500 637 L548 640 Z" fill="#7a3a1a"/>
  <!-- ear -->
  <circle cx="515.900" cy="570" r="6.700" fill="#f3b985"/>
  <path d="M513.500 567 Q517 566.500 518 570.500" stroke="#d99a68" stroke-width="0.800" fill="none"/>
  <!-- face -->
  <path d="M537.400 543.300 Q546 543.500 553 547 Q560 551 564.800 557.400 L564 576.700 Q565.500 585 564.800 593 Q563 598.500 558.900 601 Q552 603.500 544 603.300 Q536 602 529.300 598.900 Q524 595 521 590 Q519 585 518.900 579.600 Q519.500 572 521.900 566.300 Q525 560 529.300 554.400 Q533 548 537.400 543.300 Z" fill="#f6bd8b"/>
  <!-- hair front lock over right edge -->
  <path d="M556 527.800 Q564 531 567.500 540 Q570.500 550 567 561 L564.800 557.400 Q560 551 553 547 Q546 543.500 537.400 543.300 Q545 533 556 527.800 Z" fill="#a3361a"/>
  <!-- eyes -->
  <circle cx="545.300" cy="566" r="6.700" fill="#fff"/>
  <circle cx="561.100" cy="566" r="4.700" fill="#fff"/>
  <circle cx="547.800" cy="564.700" r="3.100" fill="#1a1a1a"/>
  <circle cx="562.600" cy="565.600" r="2.400" fill="#1a1a1a"/>
  <circle cx="546.800" cy="563.500" r="0.900" fill="#fff"/>
  <circle cx="562" cy="564.600" r="0.700" fill="#fff"/>
  <!-- brows -->
  <path d="M539 556 Q546 556.500 553.500 561.500 L552.500 563.500 Q546 560 539.600 559.500 Z" fill="#a3361a"/>
  <path d="M556.800 562.500 Q561 559 565.500 557 L565.500 560 Q561 561.500 558 564 Z" fill="#a3361a"/>
  <!-- nose -->
  <path d="M555 573.500 Q558.500 575 556.500 577.500" stroke="#d99a68" stroke-width="1" fill="none"/>
  <!-- mouth -->
  <path d="M543.300 587.800 Q546 582 550 581 L558.900 581.600 Q561.500 583 561 585.600 Q559 588.500 556 589.300 L545.600 592.200 Q543 591 543.300 587.800 Z" fill="#fff" stroke="#a52a3c" stroke-width="1.100"/>
  <path d="M546 588 Q551 584 557 585.500" stroke="#c85a6a" stroke-width="0.800" fill="none"/>
</g>
</g>
<!-- ============ OVERLAYS ============ -->
<g id="overlays">
  <g stroke="#7d9bd1" stroke-width="1.200" fill="none">
    <path d="M566.500 798 L566.500 176.500 L1196 176.500 L1196 798"/>
  </g>
  <g fill="#f4f8ff" stroke="#7f9dd0" stroke-width="1.100">
    <rect x="564.300" y="174.300" width="4.400" height="4.400"/>
    <rect x="878.800" y="174.300" width="4.400" height="4.400"/>
    <rect x="1193.800" y="174.300" width="4.400" height="4.400"/>
    <rect x="564.300" y="488" width="4.400" height="4.400"/>
    <rect x="1193.800" y="488" width="4.400" height="4.400"/>
  </g>
  <!-- cursor -->
  <path d="M481.300 453.600 L481.300 461.200 L483.300 459.600 L485.300 464.400 L487 463.600 L485 459.200 L487.500 459.200 Z" fill="#000" stroke="#fff" stroke-width="0.500"/>
  <!-- angle label -->
  <rect x="466" y="701.800" width="23.700" height="21.400" rx="3" fill="#bab5c3"/>
  <text x="477.800" y="716.200" font-family="Liberation Sans, sans-serif" font-size="9.500" font-weight="bold" fill="#252525" text-anchor="middle">12°</text>
  <!-- slider widget -->
  <rect x="344" y="727.700" width="267" height="29.100" rx="2" fill="#545452"/>
  <rect x="344" y="727.700" width="267" height="1" fill="#5e5e5c"/>
  <rect x="350.600" y="735" width="1.200" height="13.500" fill="#474745"/>
  <g stroke="#dedede" stroke-width="1.200" fill="none">
    <path d="M360 739.500 L368.500 739.500 M366 737.300 L368.700 739.500 L366 741.700"/>
    <path d="M369 744.500 L360.500 744.500 M363 742.300 L360.300 744.500 L363 746.700"/>
  </g>
  <rect x="380.800" y="739.300" width="7.800" height="1.500" fill="#dcdcdc"/>
  <rect x="401" y="741.700" width="148" height="1" fill="#7b7b79"/>
  <circle cx="461.900" cy="742.400" r="4.800" fill="#fff"/>
  <path d="M556.400 740.700 L564.200 740.700 M560.300 736.800 L560.300 744.600" stroke="#dcdcdc" stroke-width="1.500"/>
  <g stroke="#a9a9a9" stroke-width="1" fill="none">
    <path d="M589.300 735.500 L589.300 748"/>
    <path d="M586 739.500 Q585 742.500 588.500 743.500"/>
    <path d="M591 737.500 Q594.500 738.500 593 742 Q592 744.500 590 744.800"/>
  </g>
</g>
</svg>

<!-- /ARTWORK -->
<div id="vscroll" class="abs"></div>
<svg class="abs" style="left:55px;top:796px" width="1165" height="14" viewBox="55 796 1165 14">
  <rect x="55" y="796" width="1153" height="1.200" fill="#5d5d5b"/>
  <rect x="1208" y="796" width="12" height="1.200" fill="#4a4a48"/>
  <rect x="55" y="797.200" width="1165" height="12.800" fill="#4f4f4f"/>
  <rect x="58.800" y="798" width="38" height="11.500" fill="#444"/>
  <rect x="97.600" y="798" width="9.500" height="11.500" fill="#4a4a4a"/>
  <rect x="113.600" y="798" width="38" height="11.500" fill="#444"/>
  <rect x="152.400" y="798" width="9.500" height="11.500" fill="#4a4a4a"/>
  <rect x="195.800" y="798" width="30.800" height="11.500" fill="#444"/>
  <rect x="227.400" y="798" width="9.500" height="11.500" fill="#4a4a4a"/>
  <rect x="270" y="798" width="152" height="11.500" fill="#535353"/>
  <rect x="432" y="798" width="776" height="12" fill="#4a4a48"/>
  <g stroke="#c8c8c8" stroke-width="1.100" fill="none" stroke-linecap="round" stroke-linejoin="round">
    <path d="M100 803.500 L102.400 805.800 L104.800 803.500"/>
    <path d="M154.700 803.500 L157.100 805.800 L159.500 803.500"/>
    <path d="M229.800 803.500 L232.200 805.800 L234.600 803.500"/>
  </g>
  <g fill="#6a6a6a">
    <rect x="171.500" y="801.500" width="1" height="5.500"/><path d="M176.500 801.500 L173 804.200 L176.500 807 Z"/>
    <path d="M189 801.500 L185.500 804.200 L189 807 Z"/>
    <path d="M246.500 801.500 L250 804.200 L246.500 807 Z"/>
    <path d="M258.500 801.500 L262 804.200 L258.500 807 Z"/><rect x="262.500" y="801.500" width="1" height="5.500"/>
  </g>
  <path d="M425.300 801 L429.300 804.200 L425.300 807.400 Z" fill="#e4e4e4"/>
  <path d="M442 801.800 L439.500 804.300 L442 806.800" stroke="#6c6c6c" stroke-width="1" fill="none"/>
  <path d="M1200.500 801.800 L1203 804.300 L1200.500 806.800" stroke="#6c6c6c" stroke-width="1" fill="none"/>
  <rect x="810" y="799" width="17.500" height="10.500" rx="5" fill="#5a5a5a"/>
</svg>
<div class="abs st" style="left:61px;top:799.200px;font-weight:bold;color:#eee">212.55%</div>
<div class="abs st" style="left:115.600px;top:799.200px;font-weight:bold;color:#eee">0°</div>
<div class="abs st" style="left:198.200px;top:799.200px;font-weight:bold;color:#eee">1</div>
<div class="abs st" style="left:328.500px;top:799.200px;color:#d6d6d6;font-weight:bold">Selection</div>


<!-- RIGHT -->
<div id="dockgap" class="abs"></div>
<div id="dock" class="abs"></div>
<div id="panel" class="abs"></div>
<!-- vscroll details -->
<svg class="abs" style="left:1208px;top:92px" width="12" height="704" viewBox="1208 92 12 704">
  <path d="M1211.300 100.300 L1214 97.600 L1216.700 100.300" stroke="#8a8a8a" stroke-width="1.100" fill="none"/>
  <path d="M1211.300 789.500 L1214 792.200 L1216.700 789.500" stroke="#8a8a8a" stroke-width="1.100" fill="none"/>
  <rect x="1209" y="435" width="10" height="18.300" rx="4.500" fill="#5f5f5d"/>
</svg>
<!-- dock -->
<svg class="abs" style="left:1220px;top:70px" width="32" height="740" viewBox="1220 70 32 740">
  <defs>
    <linearGradient id="dg1" x1="0" x2="1" y1="0" y2="0"><stop offset="0" stop-color="#2c2c2c"/><stop offset="1" stop-color="#f0f0f0"/></linearGradient>
    <radialGradient id="dg2" cx="0" cy="1" r="1"><stop offset="0" stop-color="#3a3a3a"/><stop offset="1" stop-color="#f0f0f0"/></radialGradient>
  </defs>
  <path d="M1243.500 72.500 L1241.500 74.500 L1243.500 76.500 M1246.500 72.500 L1244.500 74.500 L1246.500 76.500" stroke="#8c8c8c" stroke-width="0.900" fill="none"/>
  <g fill="#454545">
    <rect x="1229" y="82.600" width="14" height="1.500"/>
    <rect x="1222" y="130" width="27.500" height="1.200"/><rect x="1229" y="134.600" width="14" height="1.500"/>
    <rect x="1222" y="202.800" width="27.500" height="1.200"/><rect x="1229" y="206.800" width="14" height="1.500"/>
    <rect x="1222" y="276" width="27.500" height="1.200"/><rect x="1229" y="279.800" width="14" height="1.500"/>
    <rect x="1222" y="328" width="27.500" height="1.200"/><rect x="1229" y="331.800" width="14" height="1.500"/>
    <rect x="1222" y="380" width="27.500" height="1.200"/>
  </g>
  <g stroke="#d6d6d6" fill="none" stroke-width="1.100" stroke-linejoin="round" stroke-linecap="round">
    <!-- palette -->
    <path d="M1236.800 92.300 Q1243.800 92.600 1243.800 96.800 Q1243.500 99.500 1240.500 99.300 Q1239 99.400 1239.200 100.600 Q1239 102.300 1235.500 102.300 Q1229 101.800 1228.900 97.500 Q1229.300 94.800 1232 94.300 Q1233.500 94.600 1234 93.500 Q1234.800 92.300 1236.800 92.300 Z" fill="#d6d6d6" stroke-width="0.600"/>
    <g fill="#535351" stroke="none"><circle cx="1232" cy="98" r="1"/><circle cx="1234.600" cy="99.700" r="1"/><circle cx="1237.600" cy="99.200" r="0.900"/><circle cx="1240.300" cy="97" r="1"/><ellipse cx="1238.500" cy="95" rx="1.800" ry="1" transform="rotate(20 1238.500 95)"/></g>
    <!-- color guide -->
    <path d="M1231 112 Q1240 113 1242 123.500 L1231 123.500 Z" fill="url(#dg2)" stroke-width="0.900"/>
    <!-- swatches -->
    <rect x="1229.800" y="144" width="12.600" height="10" fill="#d6d6d6" stroke="none"/>
  </g>
  <g fill="#8c8c8c">
    <rect x="1231" y="145.200" width="2.600" height="2.200"/><rect x="1234.800" y="145.200" width="2.600" height="2.200"/><rect x="1238.600" y="145.200" width="2.600" height="2.200"/>
    <rect x="1231" y="150.400" width="2.600" height="2.200"/><rect x="1234.800" y="150.400" width="2.600" height="2.200"/><rect x="1238.600" y="150.400" width="2.600" height="2.200"/>
  </g>
  <g stroke="#d6d6d6" fill="none" stroke-width="1.100" stroke-linejoin="round" stroke-linecap="round">
    <!-- brushes -->
    <path d="M1233 170.500 L1239.500 170.500 L1239 176.500 L1233.500 176.500 Z" fill="#d6d6d6"/>
    <path d="M1234.300 170 L1233 165.500 M1236.300 170 L1236.300 163.500 M1238.300 170 L1240.300 166" stroke-width="1.300"/>
    <path d="M1231.300 166.500 L1233 164.800 M1236.300 162.500 L1236.300 163.500 M1240 165.500 L1242 166.500" stroke-width="1.600"/>
    <!-- symbols (club) -->
    <circle cx="1236.500" cy="186.800" r="2.500" fill="#d6d6d6"/><circle cx="1233.300" cy="190.800" r="2.500" fill="#d6d6d6"/><circle cx="1239.700" cy="190.800" r="2.500" fill="#d6d6d6"/>
    <path d="M1236.500 189 L1236.500 195 M1233.500 195.800 L1239.500 195.800" stroke-width="1.400"/>
    <!-- stroke -->
    <path d="M1229.800 217 L1243.200 217" stroke-width="1"/><path d="M1229.800 220.800 L1243.200 220.800" stroke-width="1.600"/><path d="M1229.800 225 L1243.200 225" stroke-width="2.200"/>
    <!-- gradient -->
    <rect x="1230" y="237.500" width="13" height="9.500" fill="url(#dg1)" stroke-width="1.100"/>
    <!-- transparency -->
    <circle cx="1234.500" cy="261.800" r="4.200" fill="#b8b8b8" stroke="none"/>
    <circle cx="1238.300" cy="265.500" r="4.200" fill="#8c8c8c" stroke="#cfcfcf" stroke-width="0.800"/>
    <!-- appearance -->
    <circle cx="1236.500" cy="294.300" r="3.800" fill="#d6d6d6" stroke="none"/>
    <circle cx="1236.500" cy="294.300" r="5.600" stroke-width="1.300" stroke-dasharray="1 1.200" stroke="#bdbdbd"/>
    <!-- graphic styles -->
    <rect x="1233.800" y="310" width="9.400" height="9" stroke-width="1.100"/>
    <rect x="1230.500" y="316" width="4.600" height="4.600" fill="#535351" stroke-width="0.900"/>
    <circle cx="1234" cy="319.500" r="1.700" fill="#535351" stroke-width="0.800"/>
    <!-- export -->
    <path d="M1236.500 341.500 L1230.500 341.500 L1230.500 351.500 L1241 351.500 L1241 346" stroke-width="1.200"/>
    <path d="M1236 346.500 L1242.500 340 M1238.500 339.800 L1242.700 339.800 L1242.700 344" stroke-width="1.100"/>
    <!-- artboards -->
    <rect x="1230" y="361" width="7.500" height="7" stroke-width="1.100"/>
    <rect x="1233.500" y="366" width="9.500" height="7" fill="#535351" stroke-width="1.100"/>
  </g>
</svg>
<!-- panel content -->
<svg class="abs" style="left:1250px;top:70px" width="190" height="740" viewBox="1250 70 190 740">
  <path d="M1430.300 72.500 L1432.300 74.500 L1430.300 76.500 M1433.500 72.500 L1435.500 74.500 L1433.500 76.500" stroke="#8c8c8c" stroke-width="0.900" fill="none"/>
  <rect x="1252" y="80" width="188" height="19.500" fill="#474747"/>
  <rect x="1305" y="80" width="38.300" height="19.500" fill="#535351"/>
  <rect x="1346.300" y="82" width="1" height="16" fill="#424242" opacity="0.500"/>
  <rect x="1383" y="82" width="1" height="16" fill="#424242" opacity="0.600"/>
  <g fill="#c6c6c6"><rect x="1427.300" y="86.500" width="7" height="1.100"/><rect x="1427.300" y="88.900" width="7" height="1.100"/><rect x="1427.300" y="91.300" width="7" height="1.100"/></g>
  <!-- list area border -->
  <rect x="1255.800" y="103.500" width="179.200" height="690.700" fill="none" stroke="#4e4e4c" stroke-width="1"/>
  <!-- search -->
  <rect x="1260.800" y="108.400" width="152" height="15.200" fill="#434343"/>
  <circle cx="1268" cy="114.600" r="2.700" fill="none" stroke="#c2c2c2" stroke-width="1"/>
  <path d="M1270 116.700 L1272.700 119.500" stroke="#c2c2c2" stroke-width="1.200" stroke-linecap="round"/>
  <path d="M1421.300 111 L1431 111 L1427.200 115.800 L1427.200 121.300 L1425 120 L1425 115.800 Z" fill="#dedede"/>
  <!-- rows -->
  <rect x="1256.600" y="131.600" width="178.100" height="15.600" fill="#4b6b84"/>
  <g fill="#4b4b49">
    <rect x="1256.600" y="147.200" width="178.100" height="0.800"/><rect x="1256.600" y="163" width="178.100" height="0.800"/><rect x="1256.600" y="178.800" width="178.100" height="0.800"/><rect x="1256.600" y="194.600" width="178.100" height="0.800"/><rect x="1256.600" y="210.400" width="178.100" height="0.800"/><rect x="1256.600" y="226.200" width="178.100" height="0.800"/>
    <rect x="1271" y="147.200" width="0.800" height="79"/><rect x="1285.600" y="147.200" width="0.800" height="79"/><rect x="1408.300" y="147.200" width="0.800" height="79"/>
  </g>
  <!-- blue bars -->
  <g fill="#3f7cd8">
    <rect x="1288" y="132.600" width="3.600" height="13.600"/><rect x="1288" y="148.400" width="3.600" height="13.600"/><rect x="1288" y="164.200" width="3.600" height="13.600"/><rect x="1288" y="180" width="3.600" height="13.600"/><rect x="1288" y="195.800" width="3.600" height="13.600"/><rect x="1288" y="211.600" width="3.600" height="13.600"/>
  </g>
  <!-- eyes -->
  <g id="eyes" stroke="#c9c9c9" stroke-width="1" fill="none">
    <g id="eye1"><path d="M1259.200 139.200 Q1263.200 135.500 1267.200 139.200 Q1263.200 142.900 1259.200 139.200 Z" fill="#8fa3b4" stroke="#d5dde4"/><circle cx="1263.200" cy="139.200" r="1.400" fill="#d5dde4" stroke="none"/></g>
    <g><path d="M1259.200 155 Q1263.200 151.300 1267.200 155 Q1263.200 158.700 1259.200 155 Z" fill="#7b7b7b"/><circle cx="1263.200" cy="155" r="1.400" fill="#c9c9c9" stroke="none"/></g>
    <g><path d="M1259.200 170.800 Q1263.200 167.100 1267.200 170.800 Q1263.200 174.500 1259.200 170.800 Z" fill="#7b7b7b"/><circle cx="1263.200" cy="170.800" r="1.400" fill="#c9c9c9" stroke="none"/></g>
    <g><path d="M1259.200 218.200 Q1263.200 214.500 1267.200 218.200 Q1263.200 221.900 1259.200 218.200 Z" fill="#7b7b7b"/><circle cx="1263.200" cy="218.200" r="1.400" fill="#c9c9c9" stroke="none"/></g>
  </g>
  <!-- lock -->
  <rect x="1276.500" y="217.800" width="5.800" height="4.800" rx="0.600" fill="#d0d0d0"/>
  <path d="M1277.700 217.800 L1277.700 216 Q1277.700 214 1279.400 214 Q1281.100 214 1281.100 216 L1281.100 217.800" stroke="#d0d0d0" stroke-width="1" fill="none"/>
  <rect x="1279" y="219.300" width="0.900" height="1.900" fill="#555"/>
  <!-- chevrons -->
  <g stroke="#cfcfcf" stroke-width="1.200" fill="none" stroke-linecap="round" stroke-linejoin="round">
    <path d="M1297.500 137.800 L1300.100 140.600 L1302.700 137.800" stroke="#dfe6ec"/>
    <path d="M1314.500 152.300 L1317 155 L1314.500 157.700"/>
    <path d="M1314.500 168.100 L1317 170.800 L1314.500 173.500"/>
    <path d="M1314.500 183.900 L1317 186.600 L1314.500 189.300"/>
    <path d="M1314.500 199.700 L1317 202.400 L1314.500 205.100"/>
    <path d="M1314.500 215.500 L1317 218.200 L1314.500 220.900"/>
  </g>
  <!-- thumbnails -->
  <g>
    <rect x="1310.700" y="133.200" width="12.500" height="12.500" rx="1.500" fill="#fff" stroke="#2c2c2c" stroke-width="1"/>
    <path d="M1311.500 142.300 L1317 142.300 L1317.500 143.800 L1311.500 143.800 Z" fill="#5a2a80"/>
    <path d="M1318 138 L1319 137.500 L1319.500 139 L1321 138.300 L1321.300 143.500 L1318.300 143.500 L1318.800 140.500 Z" fill="#d11c4f"/>
    <rect x="1316" y="140.800" width="1.100" height="1.600" fill="#a3361a"/>

    <rect x="1327.800" y="149" width="12.500" height="12.500" rx="1.500" fill="#fff" stroke="#2c2c2c" stroke-width="1"/>
    <path d="M1331.800 151.800 L1334 151 L1335.200 152.500 L1334.500 154 L1333.200 154.200 L1334 156 L1336.200 157 L1337 153.500 L1338 152.500 L1338 157.500 L1336.500 159.800 L1332.500 159.800 L1331.500 157.500 L1332.300 155 L1331.500 153.500 Z" fill="#d11c4f"/>
    <path d="M1332.800 155.500 L1334 156.500 L1334 159.300 L1332.800 159.300 Z" fill="#e38e50"/>

    <rect x="1327.800" y="164.800" width="12.500" height="12.500" rx="1.500" fill="#fff" stroke="#2c2c2c" stroke-width="1"/>
    <circle cx="1334.300" cy="168.300" r="1.700" fill="#a3361a"/><circle cx="1334.800" cy="169" r="1.100" fill="#f6bd8b"/>
    <path d="M1333 170.500 L1335.800 170.500 L1335.800 173 L1336.500 175.500 L1335.500 175.500 L1334.500 173.500 L1333 175.500 L1332 175.500 L1333 172.800 Z" fill="#555"/>
    <path d="M1330.500 173.500 L1333 172.500 L1333 173.300 L1330.500 174.300 Z" fill="#c8c8c8"/>

    <rect x="1327.800" y="180.600" width="12.500" height="12.500" rx="1.500" fill="#fff" stroke="#2c2c2c" stroke-width="1"/>
    <path d="M1330 182 L1332.500 181.500 L1333.500 184.500 L1334.800 182.500 L1336 184.500 L1337.500 182 L1338.500 186 L1337.500 190.500 L1336 192.300 L1332 192.300 L1330.500 189 L1331.300 185.500 Z" fill="#d11c4f"/>
    <path d="M1333.500 186 L1335 186 L1335 191 L1333.500 191 Z" fill="#fff" opacity="0.600"/>

    <rect x="1327.800" y="196.400" width="12.500" height="12.500" rx="1.500" fill="#fff" stroke="#2c2c2c" stroke-width="1"/>
    <circle cx="1336.800" cy="199.300" r="1.800" fill="#a3361a"/><circle cx="1336.500" cy="200.300" r="1.200" fill="#f6bd8b"/>
    <path d="M1334 201.500 L1338 201.500 L1339 205 L1338 207.800 L1333 207.800 L1332.500 204.500 Z" fill="#333"/>
    <path d="M1329 205.500 L1334 204.300 L1334 207 L1330 207.800 Z" fill="#d0d0d0"/>

    <rect x="1327.800" y="212.200" width="12.500" height="12.500" rx="1.500" fill="#fff" stroke="#2c2c2c" stroke-width="1"/>
    <path d="M1328.500 217 L1339.700 217.300 L1339.700 219.800 L1328.500 219.500 Z" fill="#5a2a80"/>
    <path d="M1328.500 218.800 L1336 219 L1335 219.800 L1328.500 219.600 Z" fill="#28204f"/>
  </g>
  <!-- target circles -->
  <circle cx="1415.900" cy="155.300" r="4.700" fill="#777775"/>
  <g stroke="#cdcdcd" stroke-width="1" fill="none">
    <circle cx="1415.900" cy="139.300" r="2.800" stroke="#dde4ea"/><circle cx="1415.900" cy="155.300" r="2.800"/><circle cx="1415.900" cy="171" r="2.800"/><circle cx="1415.900" cy="186.900" r="2.800"/><circle cx="1415.900" cy="202.700" r="2.800"/><circle cx="1415.900" cy="218.400" r="2.800"/>
  </g>
  <rect x="1423.300" y="137" width="5" height="5" fill="#1c2f66" stroke="#16244e" stroke-width="0.800"/>
  <rect x="1424.800" y="138.500" width="2" height="2" fill="#4a86e0"/>
  <rect x="1423.300" y="152.200" width="6.200" height="6.200" fill="#3f7cd8" stroke="#16244e" stroke-width="1"/>
  <path d="M1430.800 132.300 L1434.700 132.300 L1434.700 136 Z" fill="#f2f2f2"/>
  <!-- bottom icons -->
  <g stroke="#cdcdcd" stroke-width="1" fill="none" stroke-linejoin="round" stroke-linecap="round">
    <path d="M1296 798 L1296 807.500 M1294 800 L1303.500 800 M1301.500 798 L1301.500 803 M1294 805.500 L1298.500 805.500" />
    <rect x="1300" y="803.500" width="3.500" height="3.800" fill="#cdcdcd" stroke="none"/>
    <path d="M1317 799.500 L1313 799.500 L1313 806.500 L1320 806.500 L1320 803" /><path d="M1316.500 803 L1321 798.500 M1318.500 798.300 L1321.200 798.300 L1321.200 801"/>
    <circle cx="1335.300" cy="801.300" r="2.800"/><path d="M1337.500 803.500 L1340.500 806.500" stroke-width="1.300"/>
    <rect x="1352" y="799" width="6" height="6" stroke="#676767"/><path d="M1355 800.500 L1355 803.500 M1353.500 802 L1356.500 802" stroke="#676767" stroke-width="0.800"/>
    <path d="M1370 798.500 L1370 800.500 L1372 800.500"/><rect x="1373" y="799.500" width="6.500" height="6"/><path d="M1376.200 801 L1376.200 804 M1374.700 802.500 L1377.700 802.500" stroke-width="0.900"/>
    <rect x="1391.500" y="798.500" width="7" height="7"/><path d="M1395 800.300 L1395 803.700 M1393.300 802 L1396.700 802" stroke-width="0.900"/>
    <path d="M1411 800 L1417.500 800 M1412 800 L1412.500 806.500 L1416 806.500 L1416.500 800 M1413.200 798.500 L1415.300 798.500" stroke="#626262"/>
  </g>
  <rect x="1252" y="808.300" width="188" height="1.700" fill="#3c3c3c"/>
</svg>
<div class="abs" style="left:1258.300px;top:83.500px;font-size:8.300px;font-weight:bold;color:#bababa;line-height:11px">Properties</div>
<div class="abs" style="left:1311.500px;top:83.500px;font-size:8.300px;font-weight:bold;color:#f4f4f4;line-height:11px">Layers</div>
<div class="abs" style="left:1350px;top:83.500px;font-size:8.300px;font-weight:bold;color:#bababa;line-height:11px">History</div>
<div class="abs" style="left:1281.300px;top:110.500px;font-size:7.900px;font-style:italic;color:#cccccc;line-height:11px">Search All</div>
<div class="abs lay" style="left:1327.200px;top:134px;color:#eef3f7;font-size:8.300px">Layer 1</div>
<div class="abs lay" style="left:1344.700px;top:149.600px">dragon-...</div>
<div class="abs lay" style="left:1344.700px;top:165.400px">warrior-...</div>
<div class="abs lay" style="left:1344.700px;top:181.200px">dragon-...</div>
<div class="abs lay" style="left:1344.700px;top:197px">warrior-...</div>
<div class="abs lay" style="left:1344.700px;top:212.800px">cliff</div>
<div class="abs" style="left:1256.300px;top:797.300px;font-size:8px;color:#e2e2e2;line-height:11px">1 Layer</div>


</div>
</body>
</html>
